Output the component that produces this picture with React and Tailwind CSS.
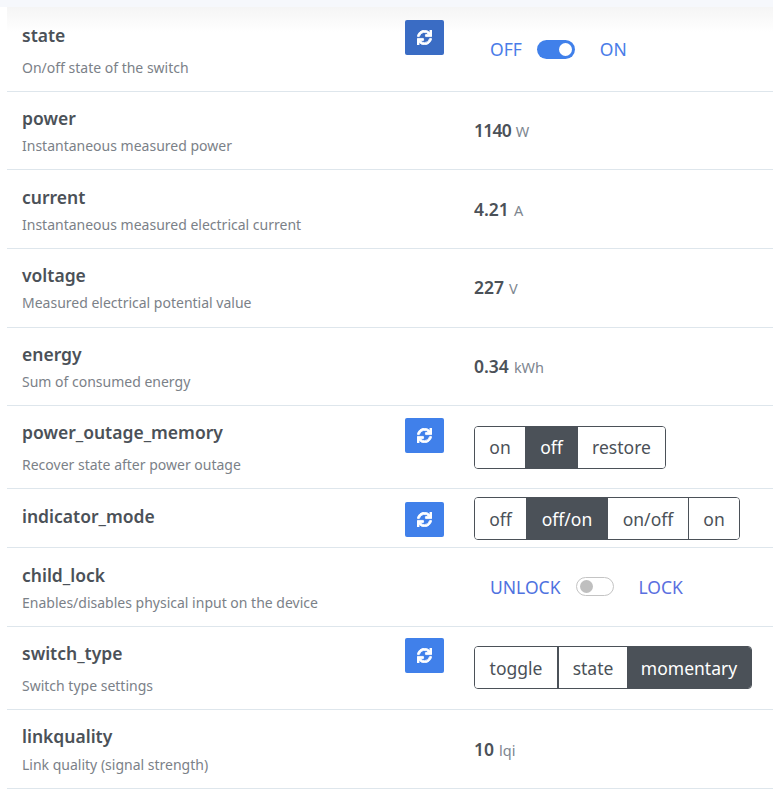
import { FaSync } from 'react-icons/fa';

const RefreshButton = ({ dark, className = '' }) => (
  <button className={`flex h-[35px] w-[39px] items-center justify-center rounded-[2px] text-white ${dark ? 'bg-[#3a6cc4]' : 'bg-[#4080ea]'} ${className}`}>
    <FaSync className="h-[15px] w-[15px]" stroke="currentColor" strokeWidth={28} />
  </button>
);

const Group = ({ items, nudge, className = '' }) => (
  <div className={`flex h-[43px] overflow-hidden rounded-[4px] border border-[#4b5158] text-[17.5px] text-[#4b5158] ${className}`}>
    {items.map((it) => (
      <div
        key={it.label}
        className={`flex items-center justify-center ${nudge ? 'pt-px' : ''} ${it.active ? 'bg-[#4b5158] text-white' : 'bg-white'} ${it.line ? 'border-l border-[#4b5158]' : ''} ${it.thick ? 'border-l-2 border-[#4b5158]' : ''}`}
        style={{ width: it.w }}
      >
        {it.label}
      </div>
    ))}
  </div>
);

const Toggle = ({ off, on, checked, offClass, onClass }) => (
  <div className="flex items-center text-[17.5px] leading-none text-[#4a7ce8]">
    <span className={offClass}>{off}</span>
    {checked ? (
      <span className="mx-[15px] flex h-[19px] w-[38px] items-center justify-end rounded-full bg-[#4080ea] pr-[3px]">
        <span className="h-[13px] w-[13px] rounded-full bg-white" />
      </span>
    ) : (
      <span className="mx-[15px] mb-[3px] flex h-[19px] w-[38px] items-center rounded-full border border-[#c4c4c4] bg-white pl-[3px]">
        <span className="h-[13px] w-[13px] rounded-full bg-[#bfbfbf]" />
      </span>
    )}
    <span className={onClass}>{on}</span>
  </div>
);

const Value = ({ n, unit, numClass = '' }) => (
  <div className="flex items-baseline gap-[5px]">
    <span className={`text-[17.5px] leading-[24px] font-semibold text-[#4b5158] ${numClass}`}>{n}</span>
    <span className="text-[14.5px] text-[#7d8690]">{unit}</span>
  </div>
);

const Row = ({ name, desc, height, action, children, nameTop, descTop }) => (
  <div className="flex border-b border-[#dee6ec]" style={{ height }}>
    <div className="flex w-[398px] flex-col pl-[15px]" style={{ paddingTop: nameTop }}>
      <div className="text-[17.5px] font-semibold leading-[24px] text-[#4b5158]">{name}</div>
      {desc && <div className="text-[14px] leading-[20px] text-[#7b8188]" style={{ marginTop: descTop }}>{desc}</div>}
    </div>
    <div className="w-[69px] shrink-0">{action}</div>
    <div className="flex-1">{children}</div>
  </div>
);

export default function App() {
  return (
    <div className="h-[793px] w-[773px] overflow-hidden bg-white" style={{ fontFamily: '"Noto Sans", "Open Sans", sans-serif' }}>
      <div className="h-[7px] bg-[#f6f8fc]" />
      <div className="pl-[7px]">
        <div className="bg-gradient-to-b from-[#f5f5f5] to-white to-[30%]">
          <Row name="state" desc="On/off state of the switch" height={85} nameTop={16} descTop={11}
            action={<RefreshButton dark className="mt-[13px]" />}>
            <div className="pl-[16px] pt-[33px]">
              <Toggle off="OFF" on="ON" checked onClass="ml-[10px]" />
            </div>
          </Row>
        </div>
        <Row name="power" desc="Instantaneous measured power" height={78} nameTop={14} descTop={6}>
          <div className="pt-[26px]"><Value n="1140" unit="W" numClass="tracking-[-0.8px]" /></div>
        </Row>
        <Row name="current" desc="Instantaneous measured electrical current" height={79} nameTop={15} descTop={6}>
          <div className="pt-[27px]"><Value n="4.21" unit="A" /></div>
        </Row>
        <Row name="voltage" desc="Measured electrical potential value" height={79} nameTop={14} descTop={6}>
          <div className="pt-[26px]"><Value n="227" unit="V" /></div>
        </Row>
        <Row name="energy" desc="Sum of consumed energy" height={78} nameTop={14} descTop={6}>
          <div className="pt-[26px]"><Value n="0.34" unit="kWh" /></div>
        </Row>
        <Row name="power_outage_memory" desc="Recover state after power outage" height={83} nameTop={14} descTop={11}
          action={<RefreshButton className="mt-[12px]" />}>
          <Group className="mt-[20px] w-[192px]" items={[
            { label: 'on', w: 50 },
            { label: 'off', w: 53, active: true },
            { label: 'restore', w: 87 },
          ]} />
        </Row>
        <Row name="indicator_mode" height={59} nameTop={15}
          action={<RefreshButton className="mt-[13px]" />}>
          <Group nudge className="mt-[8px] w-[266px]" items={[
            { label: 'off', w: 51 },
            { label: 'off/on', w: 82, active: true },
            { label: 'on/off', w: 80 },
            { label: 'on', w: 51, line: true },
          ]} />
        </Row>
        <Row name="child_lock" desc="Enables/disables physical input on the device" height={79} nameTop={15} descTop={6}>
          <div className="pl-[16px] pt-[29px]">
            <Toggle off="UNLOCK" on="LOCK" onClass="ml-[9px] text-[#5a6fe0]" offClass="mr-px text-[#4f72e0]" />
          </div>
        </Row>
        <Row name="switch_type" desc="Switch type settings" height={83} nameTop={14} descTop={11}
          action={<RefreshButton className="mt-[11px]" />}>
          <Group nudge className="mt-[19px] w-[278px]" items={[
            { label: 'toggle', w: 82 },
            { label: 'state', w: 70, thick: true },
            { label: 'momentary', w: 124, active: true },
          ]} />
        </Row>
        <Row name="linkquality" desc="Link quality (signal strength)" height={79} nameTop={14} descTop={7}>
          <div className="pt-[27px]"><Value n="10" unit="lqi" /></div>
        </Row>
      </div>
    </div>
  );
}
